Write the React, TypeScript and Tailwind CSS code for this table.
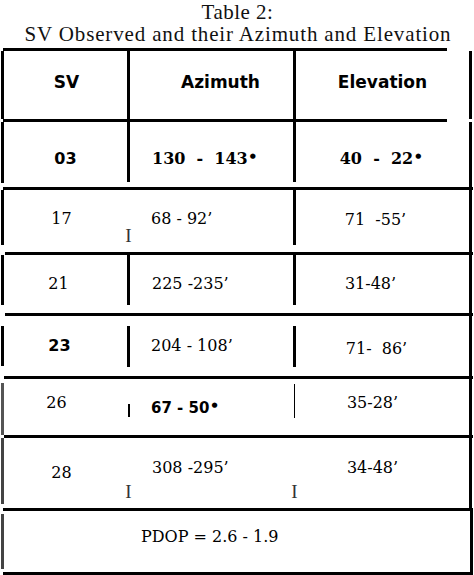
const serif = "font-['DejaVu_Serif',serif]";

// tiny serif "I" marks that stand in for broken column rules
const Tick = ({ top }: { top: string }) => (
  <div className={`flex w-[3px] shrink-0 justify-center ${top}`}>
    <span className="font-['Liberation_Serif',serif] text-[19px] leading-none text-[#333]">I</span>
  </div>
);

const Dot = () => <sup className="ml-[2px] text-[7px] align-[8px]">●</sup>;

export default function App() {
  return (
    <div className="w-[474px] h-[575px] overflow-hidden bg-white text-black">
      <div className="flex flex-col items-center font-['Liberation_Serif',serif] text-[21px] leading-[22px] text-[#111] pt-[1px] h-[48px]">
        <div className="pl-[1px] tracking-[0.5px]">Table 2:</div>
        <div className="tracking-[0.85px] pl-[2px]">SV Observed and their Azimuth and Elevation</div>
      </div>

      <div className="ml-[1px] w-[472px] flex flex-col">
        {/* header */}
        <div className="ml-[2px] h-[3px] w-[444px] bg-black" />
        <div className="flex h-[68px] items-start">
          <div className="w-[3px] h-full bg-black shrink-0" />
          <div className="w-[123px] h-full flex items-center justify-center pb-[4px] font-['DejaVu_Sans',sans-serif] font-bold text-[17px] pl-[2px]">SV</div>
          <div className="w-[3px] h-full bg-black shrink-0" />
          <div className="w-[163px] h-full flex items-center justify-center pb-[4px] pl-[18px] font-['DejaVu_Sans',sans-serif] font-bold text-[17px]">Azimuth</div>
          <div className="w-[3px] h-full bg-black shrink-0" />
          <div className="w-[173px] h-full flex items-center justify-center pb-[4px] font-['DejaVu_Sans',sans-serif] font-bold text-[17px]">Elevation</div>
          <div className="w-[3px] h-full bg-black shrink-0" />
        </div>
        <div className="ml-[2px] h-[3px] w-[444px] bg-black" />

        {/* 03 */}
        <div className="flex h-[65px] items-start">
          <div className="w-[3px] h-[61px] bg-black shrink-0" />
          <div className="w-[123px] h-full flex items-center justify-center pt-[9px] font-['DejaVu_Sans',sans-serif] font-bold text-[16px]">03</div>
          <div className="w-[3px] h-[60px] bg-black shrink-0" />
          <div className={`w-[163px] h-full flex items-center pl-[22px] pt-[9px] ${serif} font-bold text-[16px] whitespace-pre`}>130  -  143<Dot /></div>
          <div className="w-[3px] h-[60px] bg-black shrink-0" />
          <div className={`w-[173px] h-full flex items-center justify-center pt-[9px] pr-[4px] ${serif} font-bold text-[16px] whitespace-pre`}>40  -  22<Dot /></div>
          <div className="w-[3px] h-full bg-black shrink-0" />
        </div>
        <div className="ml-[2px] h-[3px] w-[470px] bg-black" />

        {/* 17 */}
        <div className="flex h-[62px] items-start">
          <div className="w-[3px] h-[55px] bg-black shrink-0" />
          <div className={`w-[123px] h-full flex items-center justify-center pr-[8px] pb-[4px] ${serif} text-[16px]`}>17</div>
          <Tick top="mt-[36px]" />
          <div className={`w-[163px] h-full flex items-center pl-[21px] pb-[4px] ${serif} text-[16px] whitespace-pre`}>68 - 92’</div>
          <div className="w-[3px] h-[55px] bg-black shrink-0" />
          <div className={`w-[173px] h-full flex items-center justify-center pb-[2px] pr-[14px] ${serif} text-[16px] whitespace-pre`}>71  -55’</div>
          <div className="w-[3px] h-full bg-black shrink-0" />
        </div>
        <div className="ml-[4px] h-[3px] w-[468px] bg-black" />

        {/* 21 */}
        <div className="flex h-[58px] items-start">
          <div className="w-[3px] h-[50px] bg-black shrink-0" />
          <div className={`w-[123px] h-full flex items-center justify-center pr-[14px] ${serif} text-[16px]`}>21</div>
          <div className="w-[3px] h-[50px] bg-black shrink-0" />
          <div className={`w-[163px] h-full flex items-center pl-[22px] ${serif} text-[16px] whitespace-pre`}>225 -235’</div>
          <div className="w-[3px] h-[50px] bg-black shrink-0" />
          <div className={`w-[173px] h-full flex items-center justify-center pr-[24px] ${serif} text-[16px]`}>31-48’</div>
          <div className="w-[3px] h-full bg-black shrink-0" />
        </div>
        <div className="ml-[4px] h-[3px] w-[468px] bg-black" />

        {/* 23 */}
        <div className="flex h-[60px] items-start">
          <div className="w-[3px] h-[40px] mt-[10px] bg-black shrink-0" />
          <div className="w-[123px] h-full flex items-center justify-center pr-[12px] font-['DejaVu_Sans',sans-serif] font-bold text-[16px]">23</div>
          <div className="w-[3px] h-[41px] mt-[10px] bg-black shrink-0" />
          <div className={`w-[163px] h-full flex items-center pl-[21px] ${serif} text-[16px] whitespace-pre`}>204 - 108’</div>
          <div className="w-[3px] h-[41px] mt-[10px] bg-black shrink-0" />
          <div className={`w-[173px] h-full flex items-center justify-center pt-[6px] pr-[12px] ${serif} text-[16px] whitespace-pre`}>71-  86’</div>
          <div className="w-[3px] h-full bg-black shrink-0" />
        </div>
        <div className="ml-[3px] h-[3px] w-[469px] bg-black" />

        {/* 26 */}
        <div className="flex h-[56px] items-start">
          <div className="w-[3px] h-[52px] mt-[4px] bg-[#555] shrink-0" />
          <div className={`w-[123px] h-full flex items-center justify-center pr-[18px] pb-[8px] ${serif} text-[16px]`}>26</div>
          <div className="w-[3px] flex justify-center shrink-0 mt-[25px]"><div className="w-[2px] h-[13px] bg-black" /></div>
          <div className="w-[163px] h-full flex items-center pl-[21px] pt-[2px] font-['DejaVu_Sans',sans-serif] font-bold text-[15px] whitespace-pre">67 - 50<Dot /></div>
          <div className="w-[3px] flex justify-center shrink-0 mt-[5px]"><div className="w-px h-[34px] bg-black" /></div>
          <div className={`w-[173px] h-full flex items-center justify-center pb-[8px] pr-[20px] ${serif} text-[16px]`}>35-28’</div>
          <div className="w-[3px] h-full bg-black shrink-0" />
        </div>
        <div className="ml-[3px] h-[3px] w-[469px] bg-black" />

        {/* 28 */}
        <div className="flex h-[70px] items-start">
          <div className="w-[3px] h-[66px] bg-[#444] shrink-0" />
          <div className={`w-[123px] h-full flex items-center justify-center pr-[8px] ${serif} text-[16px]`}>28</div>
          <Tick top="mt-[44px]" />
          <div className={`w-[163px] h-full flex items-center pl-[22px] pb-[10px] ${serif} text-[16px] whitespace-pre`}>308 -295’</div>
          <Tick top="mt-[44px]" />
          <div className={`w-[173px] h-full flex items-center justify-center pb-[10px] pr-[20px] ${serif} text-[16px]`}>34-48’</div>
          <div className="w-[3px] h-full bg-black shrink-0" />
        </div>
        <div className="ml-[2px] h-[3px] w-[470px] bg-black" />

        {/* PDOP */}
        <div className="flex h-[61px] items-start">
          <div className="w-[3px] h-[55px] mt-[3px] bg-[#444] shrink-0" />
          <div className={`flex-1 h-full flex items-center pl-[137px] pb-[10px] ${serif} text-[16px] whitespace-pre`}>PDOP = 2.6 - 1.9</div>
          <div className="w-[3px] h-full bg-black shrink-0" />
        </div>
        <div className="ml-[2px] h-[3px] w-[470px] bg-black" />
      </div>
    </div>
  );
}
